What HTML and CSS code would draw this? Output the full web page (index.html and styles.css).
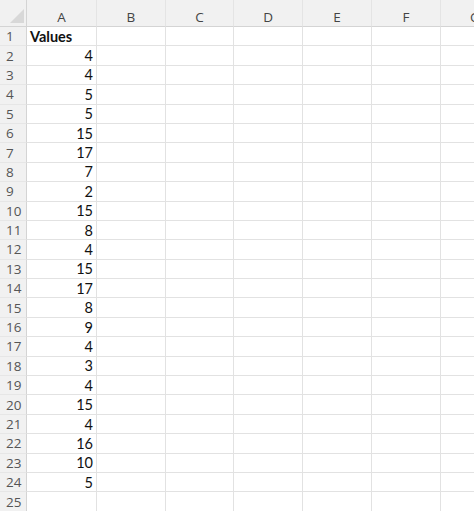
FILE: index.html
```html
<!DOCTYPE html>
<html>
<head>
<meta charset="utf-8">
<link rel="stylesheet" href="styles.css">
</head>
<body>
<div class="sheet">
  <div class="hd corner"><span class="tri"></span></div>
  <div class="hd col">A</div><div class="hd col">B</div><div class="hd col">C</div><div class="hd col">D</div><div class="hd col">E</div><div class="hd col">F</div><div class="hd col">G</div>

  <div class="rh">1</div><div class="c b">Values</div><div class="c"></div><div class="c"></div><div class="c"></div><div class="c"></div><div class="c"></div><div class="c"></div>
  <div class="rh">2</div><div class="c n">4</div><div class="c"></div><div class="c"></div><div class="c"></div><div class="c"></div><div class="c"></div><div class="c"></div>
  <div class="rh">3</div><div class="c n">4</div><div class="c"></div><div class="c"></div><div class="c"></div><div class="c"></div><div class="c"></div><div class="c"></div>
  <div class="rh">4</div><div class="c n">5</div><div class="c"></div><div class="c"></div><div class="c"></div><div class="c"></div><div class="c"></div><div class="c"></div>
  <div class="rh">5</div><div class="c n">5</div><div class="c"></div><div class="c"></div><div class="c"></div><div class="c"></div><div class="c"></div><div class="c"></div>
  <div class="rh">6</div><div class="c n">15</div><div class="c"></div><div class="c"></div><div class="c"></div><div class="c"></div><div class="c"></div><div class="c"></div>
  <div class="rh">7</div><div class="c n">17</div><div class="c"></div><div class="c"></div><div class="c"></div><div class="c"></div><div class="c"></div><div class="c"></div>
  <div class="rh">8</div><div class="c n">7</div><div class="c"></div><div class="c"></div><div class="c"></div><div class="c"></div><div class="c"></div><div class="c"></div>
  <div class="rh">9</div><div class="c n">2</div><div class="c"></div><div class="c"></div><div class="c"></div><div class="c"></div><div class="c"></div><div class="c"></div>
  <div class="rh">10</div><div class="c n">15</div><div class="c"></div><div class="c"></div><div class="c"></div><div class="c"></div><div class="c"></div><div class="c"></div>
  <div class="rh">11</div><div class="c n">8</div><div class="c"></div><div class="c"></div><div class="c"></div><div class="c"></div><div class="c"></div><div class="c"></div>
  <div class="rh">12</div><div class="c n">4</div><div class="c"></div><div class="c"></div><div class="c"></div><div class="c"></div><div class="c"></div><div class="c"></div>
  <div class="rh">13</div><div class="c n">15</div><div class="c"></div><div class="c"></div><div class="c"></div><div class="c"></div><div class="c"></div><div class="c"></div>
  <div class="rh">14</div><div class="c n">17</div><div class="c"></div><div class="c"></div><div class="c"></div><div class="c"></div><div class="c"></div><div class="c"></div>
  <div class="rh">15</div><div class="c n">8</div><div class="c"></div><div class="c"></div><div class="c"></div><div class="c"></div><div class="c"></div><div class="c"></div>
  <div class="rh">16</div><div class="c n">9</div><div class="c"></div><div class="c"></div><div class="c"></div><div class="c"></div><div class="c"></div><div class="c"></div>
  <div class="rh">17</div><div class="c n">4</div><div class="c"></div><div class="c"></div><div class="c"></div><div class="c"></div><div class="c"></div><div class="c"></div>
  <div class="rh">18</div><div class="c n">3</div><div class="c"></div><div class="c"></div><div class="c"></div><div class="c"></div><div class="c"></div><div class="c"></div>
  <div class="rh">19</div><div class="c n">4</div><div class="c"></div><div class="c"></div><div class="c"></div><div class="c"></div><div class="c"></div><div class="c"></div>
  <div class="rh">20</div><div class="c n">15</div><div class="c"></div><div class="c"></div><div class="c"></div><div class="c"></div><div class="c"></div><div class="c"></div>
  <div class="rh">21</div><div class="c n">4</div><div class="c"></div><div class="c"></div><div class="c"></div><div class="c"></div><div class="c"></div><div class="c"></div>
  <div class="rh">22</div><div class="c n">16</div><div class="c"></div><div class="c"></div><div class="c"></div><div class="c"></div><div class="c"></div><div class="c"></div>
  <div class="rh">23</div><div class="c n">10</div><div class="c"></div><div class="c"></div><div class="c"></div><div class="c"></div><div class="c"></div><div class="c"></div>
  <div class="rh">24</div><div class="c n">5</div><div class="c"></div><div class="c"></div><div class="c"></div><div class="c"></div><div class="c"></div><div class="c"></div>
  <div class="rh">25</div><div class="c"></div><div class="c"></div><div class="c"></div><div class="c"></div><div class="c"></div><div class="c"></div><div class="c"></div>
</div>
</body>
</html>
```
FILE: styles.css
```css
* { box-sizing: border-box; }
html, body { margin: 0; padding: 0; background: #ffffff; overflow: hidden; }
.sheet {
  display: grid;
  grid-template-columns: 27px 70px 68.8px 68.6px 68.6px 69px 69px 69px;
  grid-template-rows: 27px repeat(25, 19.4px);
  width: 510px;
}
.hd {
  background: #f1f1f1;
  border-bottom: 1px solid #d4d4d4;
  font-family: "Open Sans", "Noto Sans", sans-serif;
  font-size: 13.5px;
  color: #444444;
  display: flex;
  align-items: center;
  justify-content: center;
  padding-top: 8px;
}
.hd.col { border-right: 1px solid #e4e4e4; }
.corner { position: relative; border-right: 1px solid #d4d4d4; }
.tri {
  position: absolute;
  right: 2px;
  bottom: 3px;
  width: 0;
  height: 0;
  border-style: solid;
  border-width: 0 0 14px 14px;
  border-color: transparent transparent #d8d8d8 transparent;
}
.rh {
  background: #f1f1f1;
  border-right: 1px solid #d4d4d4;
  border-bottom: 1px solid #e6e6e6;
  font-family: "Open Sans", "Noto Sans", sans-serif;
  font-size: 13.5px;
  color: #555555;
  display: flex;
  align-items: center;
  padding-left: 6px;
}
.c {
  border-right: 1px solid #e2e2e2;
  border-bottom: 1px solid #e2e2e2;
  font-family: Lato, "Open Sans", sans-serif;
  font-size: 14.5px;
  color: #111111;
  display: flex;
  align-items: center;
  padding: 0 3px;
}
.c.n { justify-content: flex-end; }
.c.b { font-weight: bold; }
```
